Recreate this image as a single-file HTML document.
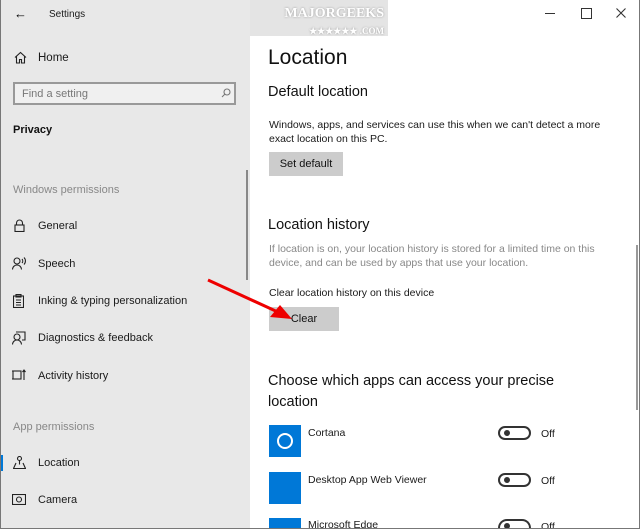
<!DOCTYPE html>
<html><head><style>
html,body{margin:0;width:640px;height:529px;overflow:hidden}
body{font-family:"Liberation Sans",sans-serif;position:relative;background:#fff}
.a{position:absolute;white-space:nowrap}
#left{position:absolute;left:0;top:0;width:250px;height:529px;background:#e8e8e8}
.n{font-size:11px;color:#1a1a1a}
.g{font-size:11px;color:#888}
.s{font-size:10.5px;color:#1a1a1a}
.btn{position:absolute;background:#ccc;font-size:11px;color:#111;text-align:center}
.tile{position:absolute;left:269px;width:32px;height:32px;background:#0078d7}
.tg{position:absolute;left:498px;width:33px;height:14px;border:2px solid #333;border-radius:9px;box-sizing:border-box}
.tg:after{content:"";position:absolute;left:4px;top:2px;width:6px;height:6px;border-radius:50%;background:#333}
svg.i{position:absolute;fill:none;stroke:#222;stroke-width:1.1}
</style></head><body>
<div id="left"></div>
<div class="a" style="left:14px;top:6px;font-size:13px">&#8592;</div>
<div class="a n" style="left:49px;top:9px;font-size:10px">Settings</div>
<svg class="i" style="left:14px;top:51px" width="13" height="13" viewBox="0 0 13 13"><path d="M1 6.5L6.5 1.5 12 6.5M2.5 5v7h3V8.5h2V12h3V5"/></svg>
<div class="a n" style="left:38px;top:52px;font-size:11.5px">Home</div>
<div class="a" style="left:13px;top:82px;width:223px;height:23px;border:2px solid #999;box-sizing:border-box;background:#f0f0f0"></div>
<div class="a g" style="left:22px;top:88px;color:#777">Find a setting</div>
<svg class="i" style="left:221px;top:88px;stroke:#777" width="10" height="10" viewBox="0 0 10 10"><circle cx="6" cy="4" r="3"/><path d="M4 6L1 9"/></svg>
<div class="a" style="left:13px;top:124px;font-size:11px;font-weight:bold;color:#111">Privacy</div>
<div class="a" style="left:246px;top:170px;width:2px;height:110px;background:#888"></div>
<div class="a g" style="left:13px;top:184px">Windows permissions</div>
<svg class="i" style="left:14px;top:219px" width="11" height="13" viewBox="0 0 11 13"><rect x="1" y="6" width="9" height="6.5"/><path d="M2.5 6V4a3 3 0 0 1 6 0v2"/></svg>
<div class="a n" style="left:38px;top:220px">General</div>
<svg class="i" style="left:12px;top:257px" width="14" height="13" viewBox="0 0 14 13"><circle cx="5" cy="4" r="3"/><path d="M0.5 12.5a4.5 4.5 0 0 1 9 0M10 2a3 3 0 0 1 0 4M12 0.5a5 5 0 0 1 0 7"/></svg>
<div class="a n" style="left:38px;top:258px">Speech</div>
<svg class="i" style="left:13px;top:294px" width="11" height="14" viewBox="0 0 11 14"><rect x="0.5" y="2" width="10" height="11.5"/><rect x="3" y="0.5" width="5" height="2.5"/><path d="M3 6h5M3 8.5h5M3 11h5"/></svg>
<div class="a n" style="left:38px;top:295px">Inking &amp; typing personalization</div>
<svg class="i" style="left:12px;top:331px" width="14" height="14" viewBox="0 0 14 14"><circle cx="5" cy="6" r="3"/><path d="M0.5 13.5a4.5 4.5 0 0 1 9 0M4 1h9v8h-3"/></svg>
<div class="a n" style="left:38px;top:332px">Diagnostics &amp; feedback</div>
<svg class="i" style="left:12px;top:369px" width="14" height="12" viewBox="0 0 14 12"><rect x="1" y="2" width="8" height="8"/><path d="M0 2h1M0 10h1M12 1v10M10.5 3l1.5-2 1.5 2"/></svg>
<div class="a n" style="left:38px;top:370px">Activity history</div>
<div class="a g" style="left:13px;top:421px">App permissions</div>
<div class="a" style="left:0;top:455px;width:3px;height:16px;background:#0078d7"></div>
<svg class="i" style="left:13px;top:456px" width="13" height="13" viewBox="0 0 13 13"><circle cx="6.5" cy="2.5" r="2"/><path d="M6.5 4.5v4M3 7l-2.5 5.5h12L10 7"/></svg>
<div class="a n" style="left:38px;top:457px">Location</div>
<svg class="i" style="left:12px;top:494px" width="14" height="11" viewBox="0 0 14 11"><rect x="0.5" y="0.5" width="13" height="10"/><circle cx="7" cy="5.5" r="2.5"/></svg>
<div class="a n" style="left:38px;top:494px">Camera</div>

<div class="a" style="left:250px;top:0;width:138px;height:36px;background:#e4e4e4;color:#fff;font:bold 14px 'Liberation Serif',serif;text-align:right;padding-right:4px;box-sizing:border-box;line-height:28px;text-shadow:0 0 2px #999">MAJORGEEKS<div style="font-size:9px;line-height:6px">★★★★★★ .COM</div></div>
<div class="a" style="left:545px;top:13px;width:10px;height:1px;background:#333"></div>
<div class="a" style="left:581px;top:8px;width:9px;height:9px;border:1px solid #333"></div>
<svg class="i" style="left:616px;top:8px;stroke:#333" width="10" height="10"><path d="M0.5 0.5l9 9M9.5 0.5l-9 9"/></svg>
<div class="a" style="left:268px;top:46px;font-size:21px;color:#111">Location</div>
<div class="a" style="left:268px;top:84px;font-size:14.5px;color:#111">Default location</div>
<div class="a s" style="left:269px;top:118px;line-height:14px">Windows, apps, and services can use this when we can't detect a more<br>exact location on this PC.</div>
<div class="btn" style="left:269px;top:152px;width:74px;height:24px;line-height:24px">Set default</div>
<div class="a" style="left:268px;top:217px;font-size:14.5px;color:#111">Location history</div>
<div class="a s" style="left:269px;top:242px;line-height:14px;color:#888">If location is on, your location history is stored for a limited time on this<br>device, and can be used by apps that use your location.</div>
<div class="a s" style="left:269px;top:287px">Clear location history on this device</div>
<div class="btn" style="left:269px;top:307px;width:70px;height:24px;line-height:24px">Clear</div>
<svg class="a" style="left:200px;top:275px" width="100" height="50"><line x1="8" y1="5" x2="80" y2="38" stroke="#e00" stroke-width="3"/><polygon points="92,44 70,42 80,30" fill="#e00"/></svg>
<div class="a" style="left:268px;top:371px;font-size:14.5px;color:#111;line-height:21px">Choose which apps can access your precise<br>location</div>
<div class="tile" style="top:425px"><div style="position:absolute;left:8px;top:8px;width:12px;height:12px;border:2px solid #fff;border-radius:50%"></div></div>
<div class="a s" style="left:308px;top:427px">Cortana</div>
<div class="tg" style="top:426px"></div><div class="a s" style="left:541px;top:428px">Off</div>
<div class="tile" style="top:472px"></div>
<div class="a s" style="left:308px;top:474px">Desktop App Web Viewer</div>
<div class="tg" style="top:473px"></div><div class="a s" style="left:541px;top:475px">Off</div>
<div class="tile" style="top:518px;height:10px"></div>
<div class="a s" style="left:308px;top:519px;height:9px;overflow:hidden">Microsoft Edge</div>
<div class="tg" style="top:519px;height:9px;border-bottom:none;border-radius:9px 9px 0 0"></div><div class="a s" style="left:541px;top:521px;height:7px;overflow:hidden">Off</div>
<div class="a" style="left:636px;top:245px;width:2px;height:165px;background:#999"></div>
<div style="position:absolute;left:0;top:0;width:640px;height:529px;border:1px solid #777;box-sizing:border-box;border-top:none"></div>
</body></html>
